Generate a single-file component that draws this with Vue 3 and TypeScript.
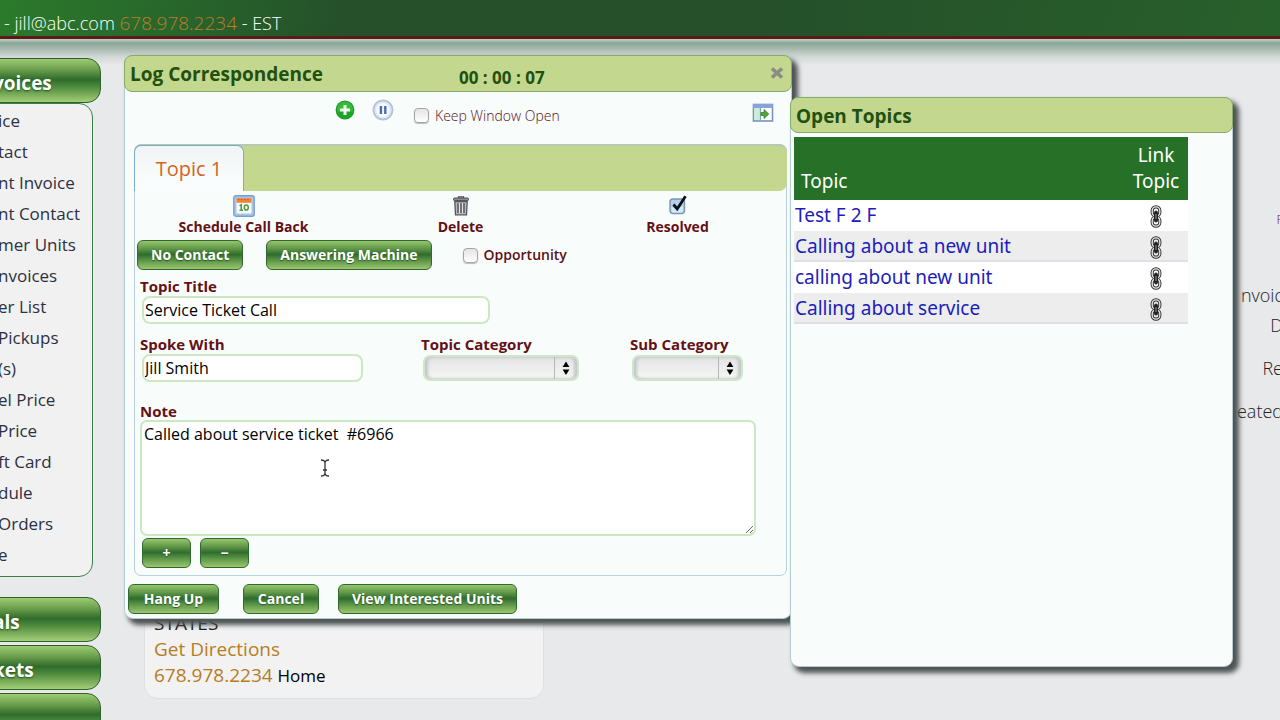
<script setup lang="ts">
import { ref } from 'vue'

interface Topic {
  id: number
  title: string
}

const menuItems: string[] = [
  'ice', 'tact', 'nt Invoice', 'nt Contact', 'mer Units', 'nvoices', 'er List', 'Pickups',
  '(s)', 'el Price', 'Price', 'ft Card', 'dule', 'Orders', 'e',
]

const menuSections: string[] = ['als', 'kets', '']

const openTopics: Topic[] = [
  { id: 1, title: 'Test F 2 F' },
  { id: 2, title: 'Calling about a new unit' },
  { id: 3, title: 'calling about new unit' },
  { id: 4, title: 'Calling about service' },
]

const keepOpen = ref(false)
const opportunity = ref(false)
const topicTitle = ref('Service Ticket Call')
const spokeWith = ref('Jill Smith')
const category = ref('')
const subCategory = ref('')
const note = ref('Called about service ticket  #6966')
</script>

<template>
  <div class="page">
    <header class="topbar">
      - jill@abc.com <a href="#" class="phone">678.978.2234</a> - EST
    </header>

    <div class="body">
      <nav class="sidebar">
        <button type="button" class="section">voices</button>
        <ul class="menu">
          <li v-for="(item, i) in menuItems" :key="i"><a href="#">{{ item }}</a></li>
        </ul>
        <button v-for="(s, i) in menuSections" :key="i" type="button" class="section" aria-label="Menu section">{{ s }}</button>
      </nav>

      <main class="main">
        <address class="card">
          <div>STATES</div>
          <div><a href="#">Get Directions</a></div>
          <div><a href="#">678.978.2234</a> <span class="kind">Home</span></div>
        </address>
      </main>

      <aside class="details">
        <div class="small">F</div>
        <div class="inv">nvoic</div>
        <div class="due">D</div>
        <div class="ref">Re</div>
        <div class="made">eated</div>
      </aside>
    </div>

    <section class="window log" aria-label="Log Correspondence">
      <div class="titlebar">
        <h2>Log Correspondence</h2>
        <span class="timer">00 : 00 : 07</span>
        <button type="button" class="icon-btn close" aria-label="Close">
          <svg width="14" height="14" viewBox="0 0 14 14"><path d="M2 2.5 L12 11.5 M12 2.5 L2 11.5" stroke="#8b8c84" stroke-width="3.6" /></svg>
        </button>
      </div>

      <div class="toolbar">
        <button type="button" class="icon-btn" aria-label="Add topic">
          <svg width="20" height="20" viewBox="0 0 20 20">
            <circle cx="10" cy="10" r="9.4" fill="#1b9a26" />
            <circle cx="10" cy="9.5" r="8" fill="#37b93a" />
            <path d="M2.6 12 A7.8 7.8 0 0 0 17.4 12 Q10 9 2.6 12" fill="#1fa32a" />
            <path d="M10 5 V15 M5 10 H15" stroke="#f2fbee" stroke-width="3" />
          </svg>
        </button>
        <button type="button" class="icon-btn" aria-label="Pause">
          <svg width="22" height="22" viewBox="0 0 22 22">
            <circle cx="11" cy="11" r="9.5" fill="#f6f9ff" stroke="#b4c2da" stroke-width="2" />
            <circle cx="11" cy="11" r="7.6" fill="none" stroke="#dbe5f5" stroke-width="1.4" />
            <path d="M8.9 7 V15 M13.3 7 V15" stroke="#4a6cb0" stroke-width="2.4" />
          </svg>
        </button>
        <label class="check light"><input v-model="keepOpen" type="checkbox">Keep Window Open</label>
        <button type="button" class="icon-btn dock" aria-label="Open side panel">
          <svg width="22" height="20" viewBox="0 0 22 20">
            <rect x="1.5" y="1.5" width="19" height="16.5" fill="#fff" stroke="#7a91bd" stroke-width="1.6" />
            <rect x="1" y="1" width="20" height="4" fill="#86a3dc" />
            <rect x="2.5" y="5" width="5.5" height="12" fill="#c9f0cf" />
            <path d="M8.5 5 V17.5" stroke="#86a3b5" stroke-width="1.2" />
            <path d="M9 9.5 H12 V6.5 L16.8 11 L12 15.5 V12.5 H9 Z" fill="#4fa83f" stroke="#37802e" stroke-width=".8" />
          </svg>
        </button>
      </div>

      <div class="panel">
        <div class="tabs" role="tablist">
          <button type="button" role="tab" class="tab" aria-selected="true">Topic 1</button>
        </div>

        <div class="actions">
          <button type="button" class="action">
            <svg width="22" height="22" viewBox="0 0 22 22">
              <rect x=".8" y=".8" width="20.4" height="20.4" rx="2" fill="#a9c6ea" stroke="#7c9fcd" stroke-width="1.4" />
              <rect x="3.5" y="3.5" width="15" height="15" rx="1.5" fill="#fbfdf9" />
              <path d="M3.5 3.2 H18.5 V7.8 H3.5 Z" fill="#ee8338" />
              <path d="M5 4.4 H17" stroke="#c96425" stroke-width="1" stroke-dasharray="1.5 1.5" />
              <path d="M6.5 10.6 L8.2 9.8 V15 M6.5 15.2 H10" fill="none" stroke="#4e9a45" stroke-width="1.5" />
              <ellipse cx="13.3" cy="12.5" rx="2" ry="2.6" fill="none" stroke="#4e9a45" stroke-width="1.5" />
            </svg>
            Schedule Call Back
          </button>
          <button type="button" class="action">
            <svg width="18" height="22" viewBox="0 0 18 22">
              <path d="M6.5 3.2 V1.8 H11.5 V3.2" fill="none" stroke="#4d4d52" stroke-width="1.3" />
              <rect x="1.5" y="3" width="15" height="2.6" rx="1" fill="#8d8e93" stroke="#4d4d52" stroke-width="1" />
              <path d="M2.8 6.5 H15.2 L14.5 19.8 H3.5 Z" fill="#b9babf" stroke="#55565a" stroke-width="1.3" />
              <path d="M6 8.2 V18 M9 8.2 V18 M12 8.2 V18" stroke="#505156" stroke-width="1.4" />
              <path d="M7.5 8.2 V18 M10.5 8.2 V18" stroke="#e6e6ea" stroke-width="1" />
            </svg>
            Delete
          </button>
          <button type="button" class="action">
            <svg width="20" height="22" viewBox="0 0 20 22">
              <rect x="2" y="4" width="14.5" height="14.5" rx="3" fill="#b3cfec" stroke="#7d94b0" stroke-width="1.4" />
              <path d="M3.5 12 Q9 15 15 11 V16 Q15 17.5 13.5 17.5 H5 Q3.5 17.5 3.5 16 Z" fill="#d3e9fb" />
              <path d="M5.5 9.5 L9.2 14 L17.5 1.2" fill="none" stroke="#0d1116" stroke-width="2.8" />
            </svg>
            Resolved
          </button>
        </div>

        <div class="quick">
          <button type="button" class="btn">No Contact</button>
          <button type="button" class="btn">Answering Machine</button>
          <label class="check"><input v-model="opportunity" type="checkbox">Opportunity</label>
        </div>

        <div class="field title-field">
          <label for="topic-title">Topic Title</label>
          <input id="topic-title" v-model="topicTitle" type="text">
        </div>

        <div class="row">
          <div class="field spoke">
            <label for="spoke-with">Spoke With</label>
            <input id="spoke-with" v-model="spokeWith" type="text">
          </div>
          <div class="field cat">
            <label for="topic-category">Topic Category</label>
            <span class="select">
              <select id="topic-category" v-model="category"><option value=""></option></select>
              <svg width="24" height="22" viewBox="0 0 24 22"><path d="M.5 0 V22" stroke="#b5b5b5" /><path d="M12 4.5 L15.4 10 H8.6 Z M12 18 L15.4 12.5 H8.6 Z" fill="#000" /></svg>
            </span>
          </div>
          <div class="field sub">
            <label for="sub-category">Sub Category</label>
            <span class="select">
              <select id="sub-category" v-model="subCategory"><option value=""></option></select>
              <svg width="24" height="22" viewBox="0 0 24 22"><path d="M.5 0 V22" stroke="#b5b5b5" /><path d="M12 4.5 L15.4 10 H8.6 Z M12 18 L15.4 12.5 H8.6 Z" fill="#000" /></svg>
            </span>
          </div>
        </div>

        <div class="field note">
          <label for="note">Note</label>
          <textarea id="note" v-model="note"></textarea>
        </div>

        <div class="resize">
          <button type="button" class="btn">+</button>
          <button type="button" class="btn">−</button>
        </div>
      </div>

      <div class="footer">
        <button type="button" class="btn hang">Hang Up</button>
        <button type="button" class="btn cancel">Cancel</button>
        <button type="button" class="btn">View Interested Units</button>
      </div>
    </section>

    <section class="window topics" aria-label="Open Topics">
      <div class="titlebar"><h2>Open Topics</h2></div>
      <table>
        <thead>
          <tr><th class="name">Topic</th><th class="link">Link Topic</th></tr>
        </thead>
        <tbody>
          <tr v-for="t in openTopics" :key="t.id">
            <td><a href="#">{{ t.title }}</a></td>
            <td class="link">
              <button type="button" class="icon-btn" :aria-label="'Link ' + t.title">
                <svg width="12" height="23" viewBox="0 0 12 23" fill="none">
                  <rect x="2.2" y="1.8" width="7.6" height="9.2" rx="3.6" stroke="#333" stroke-width="3.2" />
                  <rect x="2.2" y="12" width="7.6" height="9.2" rx="3.6" stroke="#333" stroke-width="3.2" />
                  <rect x="2.2" y="1.8" width="7.6" height="9.2" rx="3.6" stroke="#e6e6e6" stroke-width="1.3" />
                  <rect x="2.2" y="12" width="7.6" height="9.2" rx="3.6" stroke="#e6e6e6" stroke-width="1.3" />
                  <rect x="4.5" y="6" width="3" height="11" rx="1.5" fill="#222" stroke="#222" stroke-width="1" />
                  <path d="M6 9 V14" stroke="#999" stroke-width="1" />
                </svg>
              </button>
            </td>
          </tr>
        </tbody>
      </table>
    </section>

    <svg class="cursor" width="10" height="18" viewBox="0 0 10 18" aria-hidden="true">
      <path d="M1 1 Q5 1 5 4 Q5 1 9 1 M5 3 V15 M1 17 Q5 17 5 14 Q5 17 9 17 M3 11 H7" fill="none" stroke="#333" stroke-width="1.3" />
    </svg>
  </div>
</template>

<style>
body {
  background: #e8e9eb;
}
</style>

<style scoped>
.page {
  position: relative;
  height: 100vh;
  overflow: hidden;
  font-family: "Open Sans", "Noto Sans", sans-serif;
  font-size: 18px;
  color: #222;
}
.page * {
  box-sizing: border-box;
}
a {
  text-decoration: none;
  color: inherit;
}
button,
input,
select,
textarea {
  font-family: inherit;
  margin: 0;
}
svg {
  display: block;
}
.topbar {
  padding: 10px 4px 0;
  height: 39px;
  line-height: 26px;
  font-weight: 300;
  color: #fff;
  white-space: nowrap;
  background: linear-gradient(100deg, #2b7a2b 0, #28692b 12%, #25502a 27%, #25502a 60%, #28602b 100%);
  border-bottom: 3px solid #5e1a17;
}
.topbar .phone {
  color: #bd7d2b;
  font-size: 19px;
}
.body {
  display: flex;
  background: linear-gradient(#c3d0c9 0, #8aa697 4px, #a9bab0 10px, #d3d9d7 18px, #e8e9eb 26px);
}
.sidebar {
  width: 101px;
  flex: none;
  padding-top: 19px;
}
.section {
  display: block;
  width: 102px;
  height: 45px;
  margin: 0 0 3px -1px;
  padding: 5px 0 0;
  border: 1px solid #2c622c;
  border-radius: 0 14px 14px 0;
  background: linear-gradient(#9ecb73 0, #6a9d4c 25%, #2f6b2c 48%, #4f8c3e 65%, #a5cd77 100%);
  color: #fff;
  font-size: 19px;
  font-weight: 700;
  line-height: 26px;
  text-align: left;
  text-indent: -7px;
  text-shadow: 0 1px 2px #24521f;
}
.menu {
  list-style: none;
  width: 94px;
  height: 474px;
  margin: -3px 0 20px -1px;
  padding: 1px 0 0;
  border: 1px solid #3f7f45;
  border-radius: 0 14px 14px 0;
  background: #f1f1f2;
}
.menu li {
  height: 31px;
  line-height: 31px;
  font-size: 17px;
  text-indent: -2px;
  color: #2c3040;
  white-space: nowrap;
}
.main {
  flex: 1;
  padding: 560px 0 0 43px;
}
.card {
  width: 400px;
  padding: 10px 9px 9px;
  border: 1px solid #dedfe0;
  border-radius: 14px;
  background: #f2f2f3;
  font-style: normal;
  font-size: 19px;
  line-height: 26px;
}
.card a {
  color: #b57d22;
}
.card .kind {
  color: #000;
  font-size: 17px;
}
.details {
  width: 60px;
  margin-right: -3px;
  padding-top: 166px;
  text-align: right;
  font-weight: 300;
  line-height: 28px;
}
.details .small {
  font-size: 13px;
  color: #6d2233;
}
.details .inv {
  margin-top: 48px;
}
.details .due {
  margin-top: 2px;
}
.details .ref,
.details .made {
  margin-top: 15px;
}

.window {
  position: absolute;
  border: 1px solid #b4ccd0;
  border-radius: 9px;
  background: #f8fdfc;
  box-shadow: 5px 5px 5px 1px #4d5253;
}
.log {
  left: 124px;
  top: 55px;
  width: 668px;
}
.topics {
  left: 790px;
  top: 97px;
  width: 443px;
  height: 570px;
}
.titlebar {
  display: flex;
  align-items: center;
  height: 37px;
  margin: -1px;
  padding: 1px 5px 0;
  border: 1px solid #86ab6c;
  border-radius: 8px;
  background: #c3d78e;
  color: #22500f;
}
.topics .titlebar {
  height: 36px;
}
.titlebar h2 {
  margin: 0;
  width: 329px;
  font-size: 19px;
  font-weight: 700;
  line-height: 26px;
}
.timer {
  flex: 1;
  padding-top: 6px;
  font-size: 17px;
  font-weight: 700;
}
.icon-btn {
  display: block;
  padding: 0;
  border: 0;
  background: none;
}
.close {
  margin: 0 2px 3px 0;
}
.toolbar {
  display: flex;
  align-items: center;
  height: 53px;
  padding: 0 17px 15px 210px;
}
.toolbar .icon-btn {
  margin-right: 17px;
}
.toolbar .dock {
  margin: 6px 0 0 auto;
}
.check {
  display: flex;
  align-items: center;
  gap: 6px;
  font-size: 14px;
  line-height: 20px;
  color: #5a1014;
  font-weight: 600;
}
.check input {
  appearance: none;
  width: 15px;
  height: 15px;
  border: 1px solid #a5a5a5;
  border-radius: 4px;
  background: linear-gradient(#e4e4e4, #fff);
  box-shadow: 0 1px 1px #bbb;
}
.light {
  margin: 11px 0 0 3px;
  font-weight: 300;
}
.panel {
  margin: 0 4px 0 9px;
  border: 1px solid #b9cfdc;
  border-radius: 7px;
}
.tabs {
  display: flex;
  align-items: flex-end;
  height: 47px;
  margin: -1px;
  padding-left: 1px;
  border-top: 2px solid #b7c9b3;
  border-radius: 8px;
  border-bottom-left-radius: 0;
  background: #c3d78e;
}
.tab {
  width: 110px;
  height: 46px;
  margin-left: -1px;
  padding: 0;
  border: 1px solid #79aecb;
  border-bottom: 0;
  border-radius: 7px 7px 0 0;
  background: linear-gradient(#f1f4f6, #fbfefd);
  color: #d2651c;
  font-size: 20px;
}
.actions {
  display: grid;
  grid-template-columns: repeat(3, 1fr);
  padding-top: 5px;
}
.action {
  display: flex;
  flex-direction: column;
  align-items: center;
  padding: 0;
  border: 0;
  background: none;
  color: #641015;
  font-size: 14px;
  font-weight: 700;
  line-height: 20px;
}
.btn {
  height: 30px;
  padding: 0 13px;
  border: 1px solid #2f6a2e;
  border-radius: 6px;
  background: linear-gradient(#98c56d 0, #5f9647 28%, #2f6c2d 48%, #558f42 66%, #9cc771 100%);
  color: #fff;
  font-size: 14px;
  font-weight: 700;
  line-height: 20px;
  text-shadow: 0 1px 1px #2c5a26;
  white-space: nowrap;
}
.quick {
  display: flex;
  align-items: center;
  gap: 23px;
  padding: 3px 0 0 2px;
}
.quick .check {
  margin-left: 8px;
}
.field {
  display: flex;
  flex-direction: column;
}
.field label {
  color: #641015;
  font-size: 15px;
  font-weight: 700;
  line-height: 20px;
}
.field input,
.field textarea {
  border: 2px solid #cbe8c2;
  border-radius: 8px;
  background: #fff;
  color: #000;
  font-size: 16px;
  line-height: 20px;
  outline: none;
}
.field input {
  height: 28px;
  margin-left: 2px;
  padding: 0 1px;
}
.title-field {
  width: 355px;
  padding: 6px 0 0 5px;
}
.row {
  display: flex;
  padding: 10px 0 0 5px;
}
.spoke {
  width: 223px;
}
.cat {
  width: 158px;
  margin-left: 58px;
}
.sub {
  width: 113px;
  margin-left: 51px;
}
.select {
  position: relative;
  margin: 1px 0 0 2px;
}
.select select {
  display: block;
  appearance: none;
  width: 100%;
  height: 26px;
  border: 2px solid #cfe6ca;
  border-radius: 7px;
  background: linear-gradient(#e4e2e5, #f7f7f7);
  box-shadow: inset 3px 0 3px #c4c8c4, inset -3px 0 3px #c4c8c4;
}
.select svg {
  position: absolute;
  right: 1px;
  top: 2px;
  pointer-events: none;
}
.note {
  padding: 19px 30px 0 5px;
}
.note textarea {
  height: 116px;
  margin-top: -1px;
  padding: 2px;
  border-radius: 7px;
}
.resize {
  display: flex;
  gap: 9px;
  padding: 2px 0 7px 7px;
}
.resize .btn {
  width: 49px;
}
.footer {
  display: flex;
  padding: 8px 0 4px 3px;
}
.hang {
  width: 91px;
  margin-right: 24px;
}
.cancel {
  width: 76px;
  margin-right: 19px;
}

table {
  width: 394px;
  margin: 5px 0 0 3px;
  border-collapse: separate;
  border-spacing: 0;
  font-family: "Noto Sans", "Open Sans", sans-serif;
  font-size: 19px;
  line-height: 26px;
}
th {
  height: 63px;
  padding: 4px 7px 6px;
  background: #277027;
  color: #fff;
  font-weight: 400;
  text-align: left;
  vertical-align: bottom;
}
th.link {
  width: 64px;
  padding: 4px 4px 6px;
  text-align: center;
}
td {
  height: 31px;
  padding: 0 1px 2px;
  background: #fff;
  color: #211dbb;
}
tr:nth-child(even) td {
  padding-bottom: 0;
  background: #ededee;
  border-bottom: 2px solid #dfe0e6;
}
td .icon-btn {
  margin: 4px auto 0;
}
.cursor {
  position: absolute;
  left: 320px;
  top: 459px;
}
</style>
